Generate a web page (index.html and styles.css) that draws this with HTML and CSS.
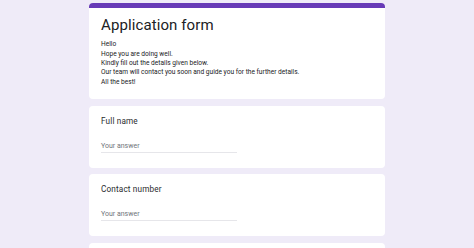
FILE: index.html
```html
<!DOCTYPE html>
<html lang="en">
<head>
<meta charset="utf-8">
<title>Application form</title>
<link rel="stylesheet" href="styles.css">
</head>
<body>
<main class="form">
  <section class="card header-card">
    <div class="accent"></div>
    <div class="header-body">
      <h1 class="title">Application form</h1>
      <div class="desc">
        <p>Hello</p>
        <p>Hope you are doing well.</p>
        <p>Kindly fill out the details given below.</p>
        <p>Our team will contact you soon and guide you for the further details.</p>
        <p>All the best!</p>
      </div>
    </div>
  </section>
  <section class="card question">
    <div class="q-label">Full name</div>
    <div class="answer">Your answer</div>
  </section>
  <section class="card question">
    <div class="q-label">Contact number</div>
    <div class="answer">Your answer</div>
  </section>
  <section class="card question"></section>
</main>
</body>
</html>
```

FILE: styles.css
```css
html, body {
  margin: 0;
  padding: 0;
  background: #efebf8;
  height: 100%;
  overflow: hidden;
}
body {
  font-family: Roboto, "Liberation Sans", Arial, sans-serif;
  color: #202124;
}
.form {
  width: 296px;
  margin-left: 89px;
  padding-top: 3px;
  display: flex;
  flex-direction: column;
  gap: 6.5px;
}
.card {
  background: #fff;
  border-radius: 4px;
  flex-shrink: 0;
}
.header-card {
  height: 96px;
  overflow: hidden;
}
.accent {
  height: 4.5px;
  background: #673ab7;
}
.header-body {
  padding: 7.5px 12px 0 12px;
}
.title {
  margin: 0;
  font-size: 15px;
  font-weight: 400;
  line-height: 20px;
  letter-spacing: 0.1px;
}
.desc {
  margin-top: 5.2px;
  font-size: 6.6px;
  line-height: 9.33px;
}
.desc p {
  margin: 0;
}
.question {
  height: 62px;
  padding: 10.3px 12px 0 12px;
  box-sizing: border-box;
}
.q-label {
  font-size: 8.2px;
  line-height: 10px;
  font-weight: 400;
  letter-spacing: 0.15px;
  color: #2a2b2e;
}
.answer {
  margin-top: 16px;
  width: 136px;
  font-size: 7px;
  line-height: 9px;
  color: #70757a;
  padding-bottom: 0.8px;
  border-bottom: 1px solid #e6e6ea;
}
```
